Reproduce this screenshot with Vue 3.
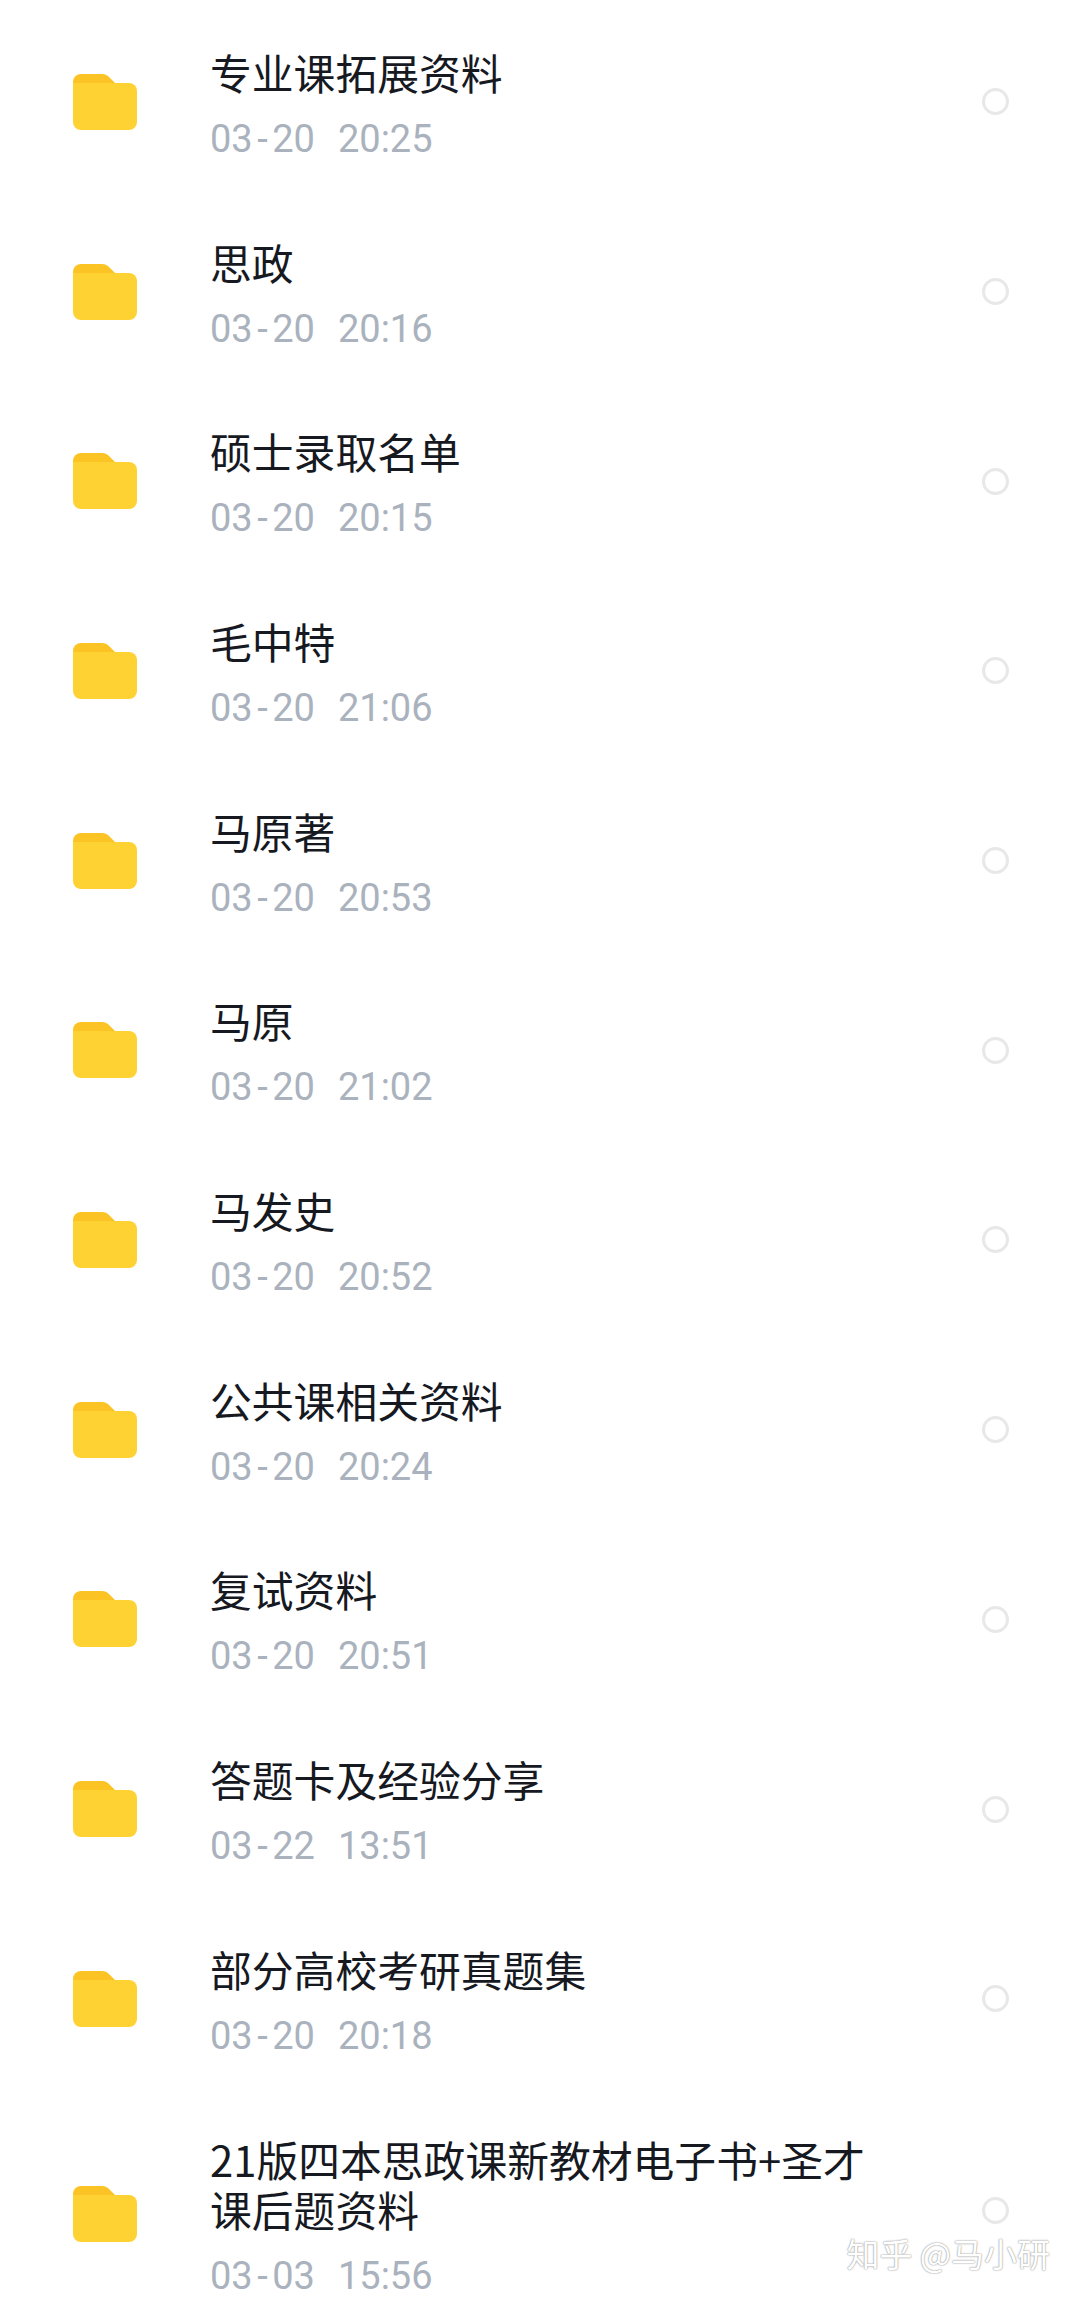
<script setup>
const rows = [
  { name: '专业课拓展资料', date: ['03', '20'], time: '20:25' },
  { name: '思政', date: ['03', '20'], time: '20:16' },
  { name: '硕士录取名单', date: ['03', '20'], time: '20:15' },
  { name: '毛中特', date: ['03', '20'], time: '21:06' },
  { name: '马原著', date: ['03', '20'], time: '20:53' },
  { name: '马原', date: ['03', '20'], time: '21:02' },
  { name: '马发史', date: ['03', '20'], time: '20:52' },
  { name: '公共课相关资料', date: ['03', '20'], time: '20:24' },
  { name: '复试资料', date: ['03', '20'], time: '20:51' },
  { name: '答题卡及经验分享', date: ['03', '22'], time: '13:51' },
  { name: '部分高校考研真题集', date: ['03', '20'], time: '20:18' },
  { name: '21版四本思政课新教材电子书+圣才\n课后题资料', date: ['03', '03'], time: '15:56', tall: true },
]
</script>

<template>
  <div class="page">
    <div v-for="(row, i) in rows" :key="i" class="row" :class="{ tall: row.tall }">
      <svg class="folder" viewBox="0 0 64 56" width="64" height="56" aria-hidden="true">
        <path d="M0 8a8 8 0 0 1 8-8h21c3 0 5 1 7 3l6 6H0z" fill="#fbc424" />
        <path d="M0 9h56a8 8 0 0 1 8 8v31a8 8 0 0 1-8 8H8a8 8 0 0 1-8-8z" fill="#ffd233" />
      </svg>
      <div class="text">
        <div class="title">{{ row.name }}</div>
        <div class="meta">
          <span>{{ row.date[0] }}<span class="dash">-</span>{{ row.date[1] }}</span>
          <span>{{ row.time }}</span>
        </div>
      </div>
      <span class="radio"></span>
    </div>
    <div class="mark">知乎 @马小研</div>
  </div>
</template>

<style scoped>
.page {
  position: relative;
  width: 1076px;
  height: 2300px;
  overflow: hidden;
  background: #fff;
  padding-top: 7px;
  box-sizing: border-box;
  font-family: "Noto Sans CJK SC", "Inter", sans-serif;
}
.row {
  display: flex;
  align-items: center;
  height: 189.7px;
  padding-left: 73px;
  padding-right: 67px;
}
.row.tall {
  height: 240px;
}
.folder {
  flex: none;
}
.text {
  flex: 1;
  margin-left: 73px;
  padding-top: 6px;
}
.title {
  font-size: 41.8px;
  line-height: 50px;
  color: #16191f;
  white-space: pre-line;
}
.meta {
  display: flex;
  gap: 23px;
  margin-top: 18px;
  font-family: "Roboto", sans-serif;
  font-size: 38px;
  line-height: 48px;
  color: #aab2bd;
}
.dash {
  margin: 0 4.5px;
}
.radio {
  flex: none;
  width: 27px;
  height: 27px;
  box-sizing: border-box;
  border: 3px solid #e8e8e8;
  border-radius: 50%;
}
.tall .radio {
  margin-bottom: 6px;
}
.mark {
  position: absolute;
  right: 26px;
  bottom: 27px;
  font-size: 33px;
  line-height: 40px;
  color: #fff;
  text-shadow: 0 0 2px #9a9a9a, 0 0 1px #9a9a9a;
}
</style>
